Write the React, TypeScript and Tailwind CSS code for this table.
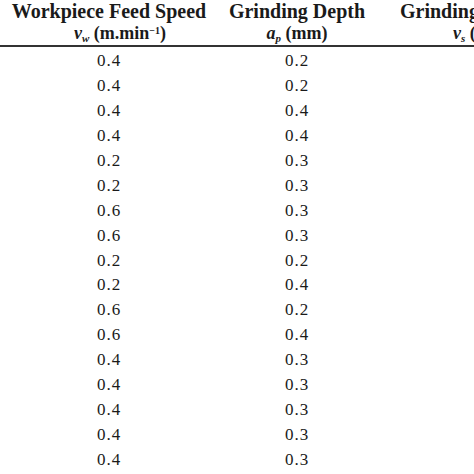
const rows = [
  ["0.4", "0.2"],
  ["0.4", "0.2"],
  ["0.4", "0.4"],
  ["0.4", "0.4"],
  ["0.2", "0.3"],
  ["0.2", "0.3"],
  ["0.6", "0.3"],
  ["0.6", "0.3"],
  ["0.2", "0.2"],
  ["0.2", "0.4"],
  ["0.6", "0.2"],
  ["0.6", "0.4"],
  ["0.4", "0.3"],
  ["0.4", "0.3"],
  ["0.4", "0.3"],
  ["0.4", "0.3"],
  ["0.4", "0.3"],
];

const cols = "grid grid-cols-[218px_158px_220px]";

export default function App() {
  return (
    <div className="w-[474px] h-[474px] overflow-hidden bg-white text-[#1a1a1a] [font-family:Liberation_Serif,serif]">
      <div className="w-[600px]">
        <div className={`${cols} font-bold text-[20px] leading-[20px] pt-[1px]`}>
          <div className="text-center whitespace-nowrap">Workpiece Feed Speed</div>
          <div className="text-center whitespace-nowrap">Grinding Depth</div>
          <div className="whitespace-nowrap pl-[24px]">Grinding Speed</div>
        </div>
        <div className={`${cols} font-bold text-[18px] leading-[18px] mt-[3px] pb-[3px]`}>
          <div className="text-center whitespace-nowrap pl-[22px]">
            <i>v<sub className="text-[11px]">w</sub></i> (m.min<sup className="text-[10px]">−1</sup>)
          </div>
          <div className="text-center whitespace-nowrap">
            <i>a<sub className="text-[11px]">p</sub></i> (mm)
          </div>
          <div className="whitespace-nowrap pl-[77px]">
            <i>v<sub className="text-[11px]">s</sub></i> (m/s)
          </div>
        </div>
        <div className="h-[1.5px] bg-[#333]" />
        <div className="pt-[2px]">
          {rows.map((r, i) => (
            <div key={i} className={`${cols} h-[24.9px] items-center text-[17px] tracking-[1px] leading-none`}>
              <div className="text-center">{r[0]}</div>
              <div className="text-center">{r[1]}</div>
              <div />
            </div>
          ))}
        </div>
      </div>
    </div>
  );
}
